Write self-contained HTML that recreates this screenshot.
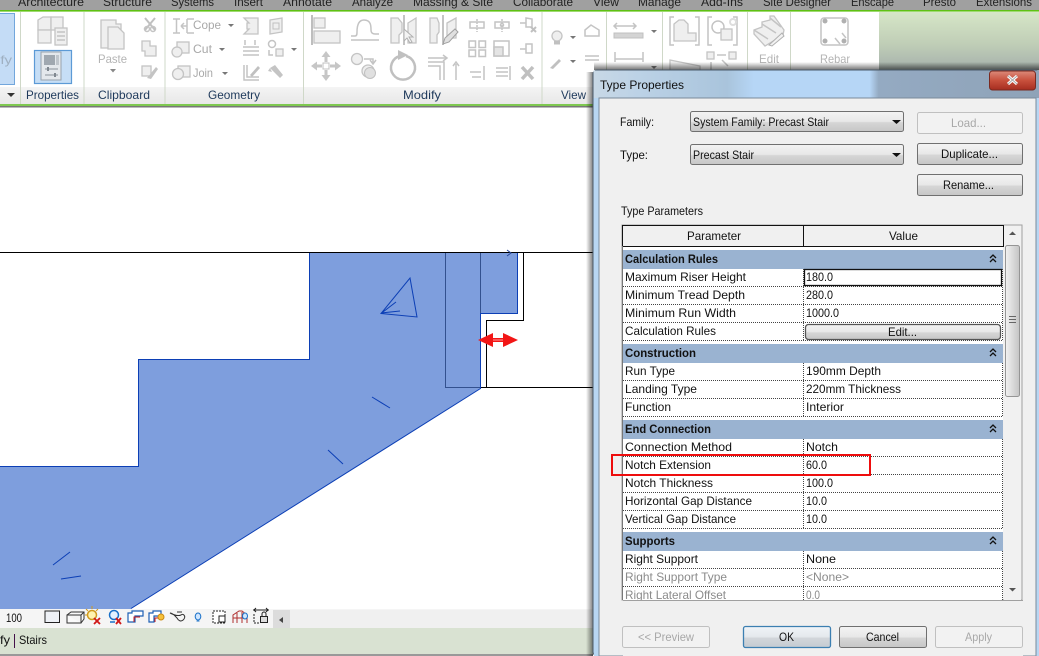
<!DOCTYPE html>
<html><head><meta charset="utf-8"><title>Type Properties</title>
<style>
html,body{margin:0;padding:0;background:#fff;overflow:hidden}
svg{display:block}
text{font-family:"Liberation Sans",sans-serif;font-size:12px;fill:#111}
.tab{fill:#222}
.pl{fill:#1e395b}
.dis{fill:#a8a8a8}
.rb{fill:#b4b4b4}
.gi{fill:none;stroke:#c4c4c4;stroke-width:1.5}
.gf{fill:#efefef;stroke:#c4c4c4;stroke-width:1.3}
.sec{fill:#9ab3d1}
.b{font-weight:bold}
.dot{stroke:#444;stroke-width:1;stroke-dasharray:1 1;fill:none}
.grey{fill:#8b8b8b}
</style></head>
<body>
<svg width="1039" height="656" viewBox="0 0 1039 656" xmlns="http://www.w3.org/2000/svg">
<defs>
<linearGradient id="btn" x1="0" y1="0" x2="0" y2="1"><stop offset="0" stop-color="#f3f3f3"/><stop offset=".5" stop-color="#e8e8e8"/><stop offset=".55" stop-color="#d6d6d6"/><stop offset="1" stop-color="#c6c6c6"/></linearGradient>
<linearGradient id="okb" x1="0" y1="0" x2="0" y2="1"><stop offset="0" stop-color="#f0f4f8"/><stop offset=".5" stop-color="#e4e8ec"/><stop offset=".55" stop-color="#d2d6da"/><stop offset="1" stop-color="#c4cbd2"/></linearGradient>
<linearGradient id="grn" x1="0" y1="0" x2="0" y2="1"><stop offset="0" stop-color="#d6e6c7"/><stop offset=".55" stop-color="#bfcdb6"/><stop offset="1" stop-color="#a3aeac"/></linearGradient>
<linearGradient id="glass" x1="0" y1="0" x2="1" y2="0"><stop offset="0" stop-color="#c8d8e6"/><stop offset=".1" stop-color="#bcd2e6"/><stop offset=".3" stop-color="#a9c4dc"/><stop offset=".36" stop-color="#b6d6f6"/><stop offset=".62" stop-color="#b6d6f6"/><stop offset=".64" stop-color="#94aac2"/><stop offset="1" stop-color="#8fa3b8"/></linearGradient>
<linearGradient id="shl" x1="0" y1="0" x2="1" y2="0"><stop offset="0" stop-color="#000" stop-opacity="0"/><stop offset="1" stop-color="#000" stop-opacity=".5"/></linearGradient>
<linearGradient id="sht" x1="0" y1="0" x2="0" y2="1"><stop offset="0" stop-color="#000" stop-opacity="0"/><stop offset="1" stop-color="#000" stop-opacity=".55"/></linearGradient>
<linearGradient id="red" x1="0" y1="0" x2="0" y2="1"><stop offset="0" stop-color="#dc8a7a"/><stop offset=".5" stop-color="#c8503c"/><stop offset="1" stop-color="#a52c1f"/></linearGradient>
<linearGradient id="thumb" x1="0" y1="0" x2="1" y2="0"><stop offset="0" stop-color="#f2f2f2"/><stop offset="1" stop-color="#c4c4c4"/></linearGradient>
<linearGradient id="lab" x1="0" y1="0" x2="0" y2="1"><stop offset="0" stop-color="#f4f4f4"/><stop offset="1" stop-color="#e8e8e8"/></linearGradient>
</defs>

<!-- Tabs -->
<rect x="0" y="0" width="1039" height="10" fill="#a0a0a0"/>
<rect x="0" y="10" width="1039" height="1.6" fill="#5fc014"/>
<g>
<text class="tab" x="18" y="6" textLength="66" lengthAdjust="spacingAndGlyphs">Architecture</text>
<text class="tab" x="103" y="6" textLength="49" lengthAdjust="spacingAndGlyphs">Structure</text>
<text class="tab" x="171" y="6" textLength="43" lengthAdjust="spacingAndGlyphs">Systems</text>
<text class="tab" x="234" y="6" textLength="29" lengthAdjust="spacingAndGlyphs">Insert</text>
<text class="tab" x="283" y="6" textLength="49" lengthAdjust="spacingAndGlyphs">Annotate</text>
<text class="tab" x="352" y="6" textLength="41" lengthAdjust="spacingAndGlyphs">Analyze</text>
<text class="tab" x="413" y="6" textLength="80" lengthAdjust="spacingAndGlyphs">Massing &amp; Site</text>
<text class="tab" x="513" y="6" textLength="60" lengthAdjust="spacingAndGlyphs">Collaborate</text>
<text class="tab" x="593" y="6" textLength="26" lengthAdjust="spacingAndGlyphs">View</text>
<text class="tab" x="638" y="6" textLength="43" lengthAdjust="spacingAndGlyphs">Manage</text>
<text class="tab" x="701" y="6" textLength="42" lengthAdjust="spacingAndGlyphs">Add-Ins</text>
<text class="tab" x="763" y="6" textLength="68" lengthAdjust="spacingAndGlyphs">Site Designer</text>
<text class="tab" x="851" y="6" textLength="43" lengthAdjust="spacingAndGlyphs">Enscape</text>
<text class="tab" x="923" y="6" textLength="33" lengthAdjust="spacingAndGlyphs">Presto</text>
<text class="tab" x="976" y="6" textLength="56" lengthAdjust="spacingAndGlyphs">Extensions</text>
</g>

<!-- Ribbon -->
<rect x="0" y="12" width="879" height="92" fill="#fff"/>
<rect x="879" y="12" width="160" height="60" fill="url(#grn)"/>
<rect x="0" y="87" width="593" height="17" fill="url(#lab)"/>
<g fill="#cfd8c8">
<rect x="20" y="12" width="1" height="92"/><rect x="83.500" y="12" width="1" height="92"/><rect x="164.500" y="12" width="1" height="92"/><rect x="303" y="12" width="1" height="92"/><rect x="541.500" y="12" width="1" height="92"/><rect x="606" y="12" width="1" height="60"/><rect x="662" y="12" width="1" height="60"/><rect x="747" y="12" width="1" height="60"/><rect x="790" y="12" width="1" height="60"/>
</g>
<rect x="0" y="104" width="593" height="2" fill="#7ec850"/>
<rect x="0" y="106" width="593" height="1.500" fill="#777"/>

<!-- Modify button -->
<rect x="-3" y="13.500" width="17.500" height="71" fill="#c4dcf6" stroke="#72a6dc"/>
<text x="-3" y="64" style="fill:#9fb0c2" textLength="15" lengthAdjust="spacingAndGlyphs">ify</text>
<path d="M7 93h8l-4 4z" fill="#333"/>

<!-- Properties -->
<g class="gf"><path d="M38 20l5-3h8v13h-13z"/><path d="M51 17h12v12l-3 1h-9z"/><path d="M38 30h13v13h-13z"/><rect x="55" y="28" width="12" height="17"/></g>
<path class="gi" d="M57 32h8M57 36h8M57 40h8"/>
<rect x="34.500" y="50.500" width="37" height="33" fill="#c6def6" stroke="#5c9ad6" stroke-width="1.200"/>
<rect x="41" y="52" width="20" height="28" fill="#e4e8ec" stroke="#98a2ac"/>
<rect x="44" y="55" width="11" height="10" fill="#a0a8b0"/><rect x="56" y="55" width="3" height="10" fill="#c0c6cc"/>
<path d="M45 69h13M45 75h13" stroke="#8a929a" fill="none"/><rect x="47" y="67" width="2" height="4" fill="#808890"/><rect x="54" y="73" width="2" height="4" fill="#808890"/>
<text class="pl" x="26" y="99" textLength="53" lengthAdjust="spacingAndGlyphs">Properties</text>

<!-- Clipboard -->
<path class="gf" d="M101 20h15v4h5v24h-20z"/><path class="gf" d="M108 27h10l6 6v16h-16z"/>
<text class="rb" x="98" y="63" textLength="29" lengthAdjust="spacingAndGlyphs">Paste</text>
<path d="M110 69h6l-3 3.500z" fill="#888"/>
<path d="M145 18l10 12M155 18l-10 12" stroke="#c0c0c0" stroke-width="2" fill="none"/><circle cx="147" cy="29" r="2.500" class="gi"/><circle cx="153" cy="29" r="2.500" class="gi"/>
<path class="gf" d="M142 41h8v5h6v10h-11v-5h-3z"/>
<rect class="gf" x="142" y="66" width="9" height="10"/><path d="M147 78l9-11 2 2-7 10z" fill="#c4c4c4"/>
<text class="pl" x="98" y="99" textLength="52" lengthAdjust="spacingAndGlyphs">Clipboard</text>

<!-- Geometry -->
<path class="gi" d="M173 19h7M173 33h7M176.500 19v14M187 19v14M187 26h-6M181 26l3-3M181 26l3 3M187 19h7M187 33h7"/>
<text class="dis" x="193" y="29" textLength="28" lengthAdjust="spacingAndGlyphs">Cope</text><path d="M228 24h6l-3 3z" fill="#777"/>
<rect class="gf" x="177" y="42" width="12" height="11"/><circle class="gf" cx="177" cy="52" r="5"/>
<text class="dis" x="193" y="53" textLength="19" lengthAdjust="spacingAndGlyphs">Cut</text><path d="M219 48h6l-3 3z" fill="#777"/>
<rect class="gf" x="178" y="66" width="12" height="11"/><circle class="gf" cx="178" cy="74" r="5.500"/>
<text class="dis" x="193" y="77" textLength="20" lengthAdjust="spacingAndGlyphs">Join</text><path d="M222 72h6l-3 3z" fill="#777"/>
<path class="gf" d="M244 18h14v16h-14l5-5h-2v-6h2z"/>
<path class="gf" d="M270 20l12-2v14l-12 2z"/><rect x="273" y="23" width="6" height="6" fill="none" stroke="#c0c0c0"/>
<path class="gi" d="M243 47h16M243 51h16M243 55h16M245 40v5M255 40v5"/>
<circle class="gi" cx="272" cy="44" r="3.500"/><rect class="gf" x="276" y="49" width="7" height="7"/><path class="gi" d="M269 50v5h4"/><path d="M291 48h6l-3 3z" fill="#777"/>
<path class="gi" d="M244 65v15h15M247 65v12h12"/><path d="M250 75l8-9 2 2-8 9z" fill="#c0c0c0"/>
<path d="M270 68l5-3 8 10-3 3zM270 68l-2 3 4 1z" fill="#c4c4c4"/>
<text class="pl" x="208" y="99" textLength="52" lengthAdjust="spacingAndGlyphs">Geometry</text>

<!-- Modify panel -->
<path d="M312 15v30" stroke="#a8a8a8" stroke-width="1.500"/>
<rect class="gf" x="314" y="18" width="11" height="10"/><rect class="gf" x="314" y="31" width="26" height="12"/>
<path class="gi" d="M351 40h28M351 36h4c2 0 2-2 2-4 0-3 0-12 7-12s7 6 7 10c0 3 2 4 4 4h4"/>
<path class="gf" d="M391 18h7l4 5v9l-3 3v8h-8z"/><path d="M404 15v30" stroke="#b0b0b0" stroke-width="1.500"/><path class="gf" d="M408 23l8-5v25h-8z"/><path d="M404 29v12l3-3 3 5 2-1-3-5h4z" fill="#f4f4f4" stroke="#b0b0b0"/>
<path class="gf" d="M430 18h7l2 5v9l-2 3v8h-7z"/><path d="M443 15v30" stroke="#b0b0b0" stroke-width="1.500"/><path class="gf" d="M447 23l9-5v20h-9z"/><path d="M443 44l2-6 10-9 3 3-9 10z" fill="#e0e0e0" stroke="#a0a0a0"/>
<g class="gi"><rect x="470" y="22" width="14" height="6"/><path d="M477 19v13" stroke-dasharray="2 1"/><rect x="495" y="22" width="14" height="6"/><circle cx="502" cy="25" r="1.500"/><path d="M502 19v13" stroke-dasharray="2 1"/><path d="M520 23h6M526 18l6 1v8l-6 0z"/></g>
<path d="M531 27l5 5M536 27l-5 5" stroke="#c0c0c0" stroke-width="2"/>
<g class="gi"><rect x="469" y="41" width="6.500" height="6.500"/><rect x="479" y="41" width="6.500" height="6.500"/><rect x="469" y="50" width="6.500" height="6.500"/><rect x="479" y="50" width="6.500" height="6.500"/><rect x="494" y="41" width="15" height="15"/><rect x="494" y="47" width="9" height="9" fill="#e4e4e4"/></g>
<path class="gi" d="M520 49h6M526 44h6v9h-6z"/>
<g class="gi"><path d="M470 72h11M472 77h9M484 66v14"/><path d="M496 68h12M496 72h12M496 76h12M510 66v14"/></g>
<path d="M522 67l11 12M533 67l-11 12" stroke="#c0c0c0" stroke-width="3.500"/>
<path d="M326 51l4.500 6h-3v5h-3v-5h-3zM326 81l-4.500-6h3v-5h3v5h3zM311 66l6-4.500v3h5v3h-5v3zM341 66l-6 4.500v-3h-5v-3h5v-3z" fill="#c6c6c6"/><rect x="323" y="63" width="6" height="6" fill="#fff" stroke="#c0c0c0"/>
<circle class="gf" cx="357" cy="59" r="5.500"/><circle class="gf" cx="368" cy="71" r="6"/><circle cx="370" cy="73" r="5.500" fill="#e0e0e0" stroke="#c0c0c0"/><path class="gi" d="M364 59h9v4M370 60l3 4 3-4"/>
<path d="M400 56a12 12 0 1 0 6 0" fill="none" stroke="#c0c0c0" stroke-width="2.500"/><path d="M398 50l10 5-10 5z" fill="#c0c0c0"/>
<g class="gi"><path d="M428 58h18M428 62h16v18M428 66h12v14"/><path d="M443 55l4 3-4 3M456 80v-16M453 66l3-4 3 4"/></g>
<text class="pl" x="403" y="99" textLength="38" lengthAdjust="spacingAndGlyphs">Modify</text>

<!-- View panel -->
<circle class="gf" cx="557" cy="36" r="5"/><rect x="554" y="41" width="6" height="3.500" fill="#c0c0c0"/><path d="M570 36h6l-3 3z" fill="#777"/>
<path d="M550 68l9-9 2 2-8 8z" fill="#c0c0c0"/><path d="M570 60h6l-3 3z" fill="#777"/>
<path class="gi" d="M585 30l6-5 8 5v6h-14z"/><path d="M585 56h14M585 60h14" class="gi"/>
<text class="pl" x="561" y="99" textLength="25" lengthAdjust="spacingAndGlyphs">View</text>

<!-- Right ribbon -->
<path class="gi" d="M614 26h22M617 23l-3 3 3 3M633 23l3 3-3 3"/><rect x="614" y="33" width="29" height="5" fill="#d4d4d4" stroke="#c0c0c0"/>
<path d="M651 30h6l-3 3z" fill="#777"/>
<path class="gi" d="M615 52v10M643 52v10M615 59h28"/><path d="M651 66h6l-3 3z" fill="#777"/>
<path class="gi" d="M674 17h-4v28h4M695 17h4v28h-4"/><path class="gf" d="M674 24l5-4h5l4 4v9h8v8h-22z"/>
<path class="gi" d="M712 17h-4v28h4M733 17h4v28h-4"/><circle class="gi" cx="718" cy="27" r="6"/><rect class="gf" x="721" y="29" width="11" height="11"/><circle cx="733" cy="22" r="3" fill="none" stroke="#ddd" stroke-width="2"/>
<path class="gf" d="M670 60l30 6v7h-30z"/>
<rect class="gf" x="707" y="52" width="7" height="7"/><path class="gi" d="M717 55h9"/><rect class="gf" x="729" y="52" width="7" height="7"/><path class="gi" d="M711 62v8M722 60l6 6"/>
<path class="gf" d="M754 30l8-3v-5l8-2v-4h4l10 14-1 5-18 11-11-12z"/><path class="gi" d="M754 30l14 9M762 24l14 9M770 18l11 9"/><path d="M769 45l13-12 2 3-12 10z" fill="#f2f2f2" stroke="#b0b0b0"/>
<text class="rb" x="759" y="63" textLength="20" lengthAdjust="spacingAndGlyphs">Edit</text>
<rect class="gi" x="821" y="18" width="27" height="27" rx="3"/><circle cx="825" cy="21" r="2.500" fill="#b0b0b0"/><circle cx="844" cy="21" r="2.500" fill="#b0b0b0"/><circle cx="825" cy="41" r="2.500" fill="#b0b0b0"/><circle cx="844" cy="41" r="2.500" fill="#b0b0b0"/><path class="gi" d="M835 38l5 6M842 33l4 5"/>
<text class="rb" x="820" y="63" textLength="30" lengthAdjust="spacingAndGlyphs">Rebar</text>
<rect x="594" y="62" width="445" height="8" fill="url(#sht)"/>

<!-- Canvas -->
<path d="M0 466H138V359H309V252H517V313H480V389L131 609H0Z" fill="#7e9edd"/>
<path d="M0 466.500H138.500V359.500H309.500V252" fill="none" stroke="#0c3fb5"/>
<path d="M480.500 313V388.500L131 608.500" fill="none" stroke="#0c3fb5"/>
<path d="M480.500 313.500H517.500V252" fill="none" stroke="#0c3fb5"/>
<path d="M445.500 252V387.500H480M480.500 252V313" fill="none" stroke="#33518f"/>
<path d="M0 252.500H594" stroke="#000"/>
<path d="M523.500 252V320.500H486.500V387.500H594" fill="none" stroke="#000"/>
<path d="M481 387.500H486" stroke="#000"/>
<path d="M410 278L417 317L381 313.500ZM381 313.500L396 302M381 313L400 311M372 397L390 408M328 450L343 464M53 565L70 552M61 579L81 576" fill="none" stroke="#0c3fb5"/>
<path d="M507 250l4 3-4 3" fill="none" stroke="#2a4a9a"/>
<path d="M478 340L493 333V338H503V333L518 340L503 347V342H493V347Z" fill="#f21616"/>
<path d="M493 340H503" stroke="#ff7070" stroke-width="1.500"/>

<!-- View control bar -->
<rect x="0" y="609" width="593" height="19" fill="#f5f5f5"/>
<text x="6" y="622" textLength="16" lengthAdjust="spacingAndGlyphs">100</text>
<rect x="45" y="611" width="14.500" height="11.500" fill="#eef1f6" stroke="#222"/>
<path d="M67 623h14v-8h-14zM67 615l4-3h13v7l-3 4M81 615l3-3" fill="#fafafa" stroke="#333"/>
<circle cx="92" cy="615" r="4.500" fill="#fff3b0" stroke="#d09a1e" stroke-width="1.500"/><path d="M86 609l2 2M92 606v3M98 609l-2 2M85 615h2" stroke="#d09a1e"/><path d="M94 618l6 6M100 618l-6 6" stroke="#d01818" stroke-width="1.800"/>
<circle cx="114" cy="615" r="4.500" fill="#e3f1ff" stroke="#1970c8" stroke-width="1.500"/><path d="M110 622h5" stroke="#1970c8" stroke-width="1.500"/><path d="M116 618l5 6M121 618l-5 6" stroke="#d01818" stroke-width="1.800"/>
<path d="M128 622v-9h4v-2h11v5h-8v6z" fill="#fff" stroke="#1d5fb4" stroke-width="1.200"/><path d="M134 622v-5h6" stroke="#d01818" fill="none"/>
<path d="M149 622v-9h4v-2h8v5h-7v6z" fill="#fff" stroke="#1d5fb4" stroke-width="1.200"/><path d="M155 622v-4h3" stroke="#d01818" fill="none"/><circle cx="161" cy="617" r="3" fill="#f6c13a" stroke="#cc8a10"/>
<path d="M170 613c3 0 5 3 7 5 1 2 4 5 7 1 2-3-1-6-3-4-2 1-5 1-11-2z" fill="none" stroke="#333"/><path d="M177 612h5" stroke="#333"/>
<ellipse cx="198" cy="616.500" rx="2.800" ry="3.500" fill="#cfe6ff" stroke="#1970c8"/><path d="M196.500 621h3" stroke="#1970c8"/>
<rect x="213" y="611" width="12" height="12" fill="#fff" stroke="#222" stroke-dasharray="2 1"/><rect x="219" y="616" width="6" height="6" fill="#fff" stroke="#222"/>
<path d="M233 623v-8l6-4h3l5 4v8M233 618h14M237 613v10M242 612v11" fill="none" stroke="#b03030"/><ellipse cx="245" cy="616" rx="2.500" ry="3" fill="#cfe6ff" stroke="#1970c8"/>
<path d="M254 609v2M254 610h14M268 609v2M256 608l-2 2 2 2M266 608l2 2-2 2" fill="none" stroke="#222"/><path d="M254 614v9h6" fill="none" stroke="#222" stroke-dasharray="2 1"/><rect x="260.500" y="616.500" width="7" height="6" fill="#ddd" stroke="#222"/><path d="M262 616v-2a2 2 0 0 1 4 0v2" fill="none" stroke="#222"/>
<rect x="273" y="610" width="17" height="18" fill="#dcdcdc"/>
<rect x="290" y="610" width="303" height="18" fill="#f0f0f0"/>
<path d="M283 617v6l-4-3z" fill="#444"/>

<!-- Status bar -->
<rect x="0" y="628" width="593" height="26" fill="#d9e2d2"/>
<rect x="0" y="654" width="593" height="2" fill="#999"/>
<text x="0" y="644" textLength="10" lengthAdjust="spacingAndGlyphs">fy</text>
<rect x="14" y="634" width="1" height="14" fill="#44114a"/>
<text x="19" y="644" textLength="28" lengthAdjust="spacingAndGlyphs">Stairs</text>

<!-- Dialog shadow + frame -->
<rect x="586" y="72" width="7" height="584" fill="url(#shl)"/>
<rect x="593" y="70" width="446" height="586" fill="#bcd8f0" stroke="#4a5a6a" rx="4"/>
<rect x="593.500" y="70.500" width="445.500" height="28" fill="url(#glass)"/>
<rect x="594" y="98" width="5" height="558" fill="#b8d6f2"/>
<rect x="1036" y="98" width="3" height="558" fill="#b8d6f2"/>
<rect x="599" y="98" width="437" height="558" fill="#f0f0f0" stroke="#7a8a9a"/>
<text x="600" y="89" textLength="84" lengthAdjust="spacingAndGlyphs">Type Properties</text>
<rect x="989.500" y="71" width="46" height="19" rx="3" fill="url(#red)" stroke="#7a2a20"/>
<path d="M1008 76l9 8M1017 76l-9 8" stroke="#fff" stroke-width="3"/>
<path d="M1008 76l9 8M1017 76l-9 8" stroke="#555" opacity=".5"/>

<!-- Dialog controls -->
<text x="620" y="126" textLength="34" lengthAdjust="spacingAndGlyphs">Family:</text>
<text x="620" y="159" textLength="28" lengthAdjust="spacingAndGlyphs">Type:</text>
<rect x="690.500" y="111.500" width="213" height="20" rx="2" fill="url(#btn)" stroke="#707070"/>
<text x="693" y="126" textLength="136" lengthAdjust="spacingAndGlyphs">System Family: Precast Stair</text>
<path d="M892 120h9l-4.500 4z" fill="#111"/>
<rect x="690.500" y="144.500" width="213" height="20" rx="2" fill="url(#btn)" stroke="#707070"/>
<text x="693" y="159" textLength="61" lengthAdjust="spacingAndGlyphs">Precast Stair</text>
<path d="M892 153h9l-4.500 4z" fill="#111"/>
<rect x="917.500" y="112.500" width="105" height="21" rx="2" fill="#f2f2f2" stroke="#c0c0c0"/>
<text class="dis" x="951" y="127" textLength="35" lengthAdjust="spacingAndGlyphs">Load...</text>
<rect x="917.500" y="143.500" width="105" height="21" rx="2" fill="url(#btn)" stroke="#707070"/>
<text x="941" y="158" textLength="57" lengthAdjust="spacingAndGlyphs">Duplicate...</text>
<rect x="917.500" y="174.500" width="105" height="21" rx="2" fill="url(#btn)" stroke="#707070"/>
<text x="943" y="189" textLength="51" lengthAdjust="spacingAndGlyphs">Rename...</text>
<text x="621" y="215" textLength="82" lengthAdjust="spacingAndGlyphs">Type Parameters</text>

<!-- Grid -->
<rect x="622" y="225" width="400" height="375" fill="#f0f0f0" stroke="#a0a0a0"/>
<rect x="623" y="226" width="380" height="374" fill="#fff"/>
<rect x="622.500" y="225.500" width="381" height="21" fill="#f0f0f0" stroke="#111"/>
<path d="M803.500 226V246" stroke="#111"/>
<text x="687" y="240" textLength="54" lengthAdjust="spacingAndGlyphs">Parameter</text>
<text x="889" y="240" textLength="29" lengthAdjust="spacingAndGlyphs">Value</text>

<rect class="sec" x="623" y="250" width="380" height="19"/>
<rect class="sec" x="623" y="344" width="380" height="19"/>
<rect class="sec" x="623" y="420" width="380" height="19"/>
<rect class="sec" x="623" y="532" width="380" height="19"/>
<text class="b" x="625" y="263" textLength="93" lengthAdjust="spacingAndGlyphs">Calculation Rules</text>
<text class="b" x="625" y="357" textLength="71" lengthAdjust="spacingAndGlyphs">Construction</text>
<text class="b" x="625" y="433" textLength="86" lengthAdjust="spacingAndGlyphs">End Connection</text>
<text class="b" x="625" y="545" textLength="50" lengthAdjust="spacingAndGlyphs">Supports</text>
<g fill="none" stroke="#111" stroke-width="1.300">
<path d="M990 258l3-3 3 3M990 262l3-3 3 3"/><path d="M990 352l3-3 3 3M990 356l3-3 3 3"/><path d="M990 428l3-3 3 3M990 432l3-3 3 3"/><path d="M990 540l3-3 3 3M990 544l3-3 3 3"/>
</g>

<path class="dot" d="M623 286.500H1003M623 304.500H1003M623 322.500H1003M623 340.500H1003M623 380.500H1003M623 398.500H1003M623 416.500H1003M623 456.500H1003M623 474.500H1003M623 492.500H1003M623 510.500H1003M623 528.500H1003M623 568.500H1003M623 586.500H1003"/>
<path class="dot" d="M803.500 269V341M803.500 363V417M803.500 439V529M803.500 551V600M1002.500 269V341M1002.500 363V417M1002.500 439V529M1002.500 551V600"/>
<path d="M622.500 246V600" stroke="#777"/>

<text x="625" y="281" textLength="121" lengthAdjust="spacingAndGlyphs">Maximum Riser Height</text>
<text x="625" y="299" textLength="120" lengthAdjust="spacingAndGlyphs">Minimum Tread Depth</text>
<text x="625" y="317" textLength="111" lengthAdjust="spacingAndGlyphs">Minimum Run Width</text>
<text x="625" y="335" textLength="91" lengthAdjust="spacingAndGlyphs">Calculation Rules</text>
<text x="625" y="375" textLength="50" lengthAdjust="spacingAndGlyphs">Run Type</text>
<text x="625" y="393" textLength="72" lengthAdjust="spacingAndGlyphs">Landing Type</text>
<text x="625" y="411" textLength="46" lengthAdjust="spacingAndGlyphs">Function</text>
<text x="625" y="451" textLength="107" lengthAdjust="spacingAndGlyphs">Connection Method</text>
<text x="625" y="469" textLength="86" lengthAdjust="spacingAndGlyphs">Notch Extension</text>
<text x="625" y="487" textLength="88" lengthAdjust="spacingAndGlyphs">Notch Thickness</text>
<text x="625" y="505" textLength="127" lengthAdjust="spacingAndGlyphs">Horizontal Gap Distance</text>
<text x="625" y="523" textLength="111" lengthAdjust="spacingAndGlyphs">Vertical Gap Distance</text>
<text x="625" y="563" textLength="73" lengthAdjust="spacingAndGlyphs">Right Support</text>
<text class="grey" x="625" y="581" textLength="102" lengthAdjust="spacingAndGlyphs">Right Support Type</text>
<text class="grey" x="625" y="599" textLength="101" lengthAdjust="spacingAndGlyphs">Right Lateral Offset</text>

<rect x="804.500" y="269.500" width="197" height="16" fill="#fff" stroke="#111" stroke-width="1.300"/>
<text x="806" y="281" textLength="27" lengthAdjust="spacingAndGlyphs">180.0</text>
<text x="806" y="299" textLength="27" lengthAdjust="spacingAndGlyphs">280.0</text>
<text x="806" y="317" textLength="33" lengthAdjust="spacingAndGlyphs">1000.0</text>
<rect x="805.500" y="324.500" width="195" height="15" rx="3" fill="url(#btn)" stroke="#555" stroke-width="1.300"/>
<text x="888" y="336" textLength="29" lengthAdjust="spacingAndGlyphs">Edit...</text>
<text x="806" y="375" textLength="75" lengthAdjust="spacingAndGlyphs">190mm Depth</text>
<text x="806" y="393" textLength="95" lengthAdjust="spacingAndGlyphs">220mm Thickness</text>
<text x="806" y="411" textLength="38" lengthAdjust="spacingAndGlyphs">Interior</text>
<text x="806" y="451" textLength="32" lengthAdjust="spacingAndGlyphs">Notch</text>
<text x="806" y="469" textLength="21" lengthAdjust="spacingAndGlyphs">60.0</text>
<text x="806" y="487" textLength="27" lengthAdjust="spacingAndGlyphs">100.0</text>
<text x="806" y="505" textLength="21" lengthAdjust="spacingAndGlyphs">10.0</text>
<text x="806" y="523" textLength="21" lengthAdjust="spacingAndGlyphs">10.0</text>
<text x="806" y="563" textLength="30" lengthAdjust="spacingAndGlyphs">None</text>
<text class="grey" x="806" y="581" textLength="43" lengthAdjust="spacingAndGlyphs">&lt;None&gt;</text>
<text class="grey" x="806" y="599" textLength="14" lengthAdjust="spacingAndGlyphs">0.0</text>
<rect x="623" y="600" width="400" height="1" fill="#a0a0a0"/>
<rect x="623" y="601" width="400" height="55" fill="#f0f0f0"/>

<!-- Scrollbar -->
<rect x="1004" y="226" width="17" height="374" fill="#f1f1f1"/>
<path d="M1009 235h7l-3.500-3.500z" fill="#555"/>
<path d="M1009 588h7l-3.500 3.500z" fill="#555"/>
<rect x="1005.500" y="245.500" width="14" height="151" rx="2" fill="url(#thumb)" stroke="#959595"/>
<path d="M1009 316.500h7M1009 319.500h7M1009 322.500h7" stroke="#666"/>

<!-- Highlight -->
<rect x="612" y="455" width="258" height="20" fill="none" stroke="#ee0d0d" stroke-width="2"/>

<!-- Bottom buttons -->
<rect x="622.500" y="626.500" width="87" height="21" rx="2" fill="#f2f2f2" stroke="#c0c0c0"/>
<text class="dis" x="638" y="641" textLength="56" lengthAdjust="spacingAndGlyphs">&lt;&lt; Preview</text>
<rect x="743.500" y="626.500" width="87" height="21" rx="2" fill="url(#okb)" stroke="#3c7fb1" stroke-width="1.300"/>
<text x="779" y="641" textLength="15" lengthAdjust="spacingAndGlyphs">OK</text>
<rect x="839.500" y="626.500" width="87" height="21" rx="2" fill="url(#btn)" stroke="#707070"/>
<text x="866" y="641" textLength="33" lengthAdjust="spacingAndGlyphs">Cancel</text>
<rect x="935.500" y="626.500" width="87" height="21" rx="2" fill="#f2f2f2" stroke="#c0c0c0"/>
<text class="dis" x="965" y="641" textLength="27" lengthAdjust="spacingAndGlyphs">Apply</text>
</svg>
</body></html>
